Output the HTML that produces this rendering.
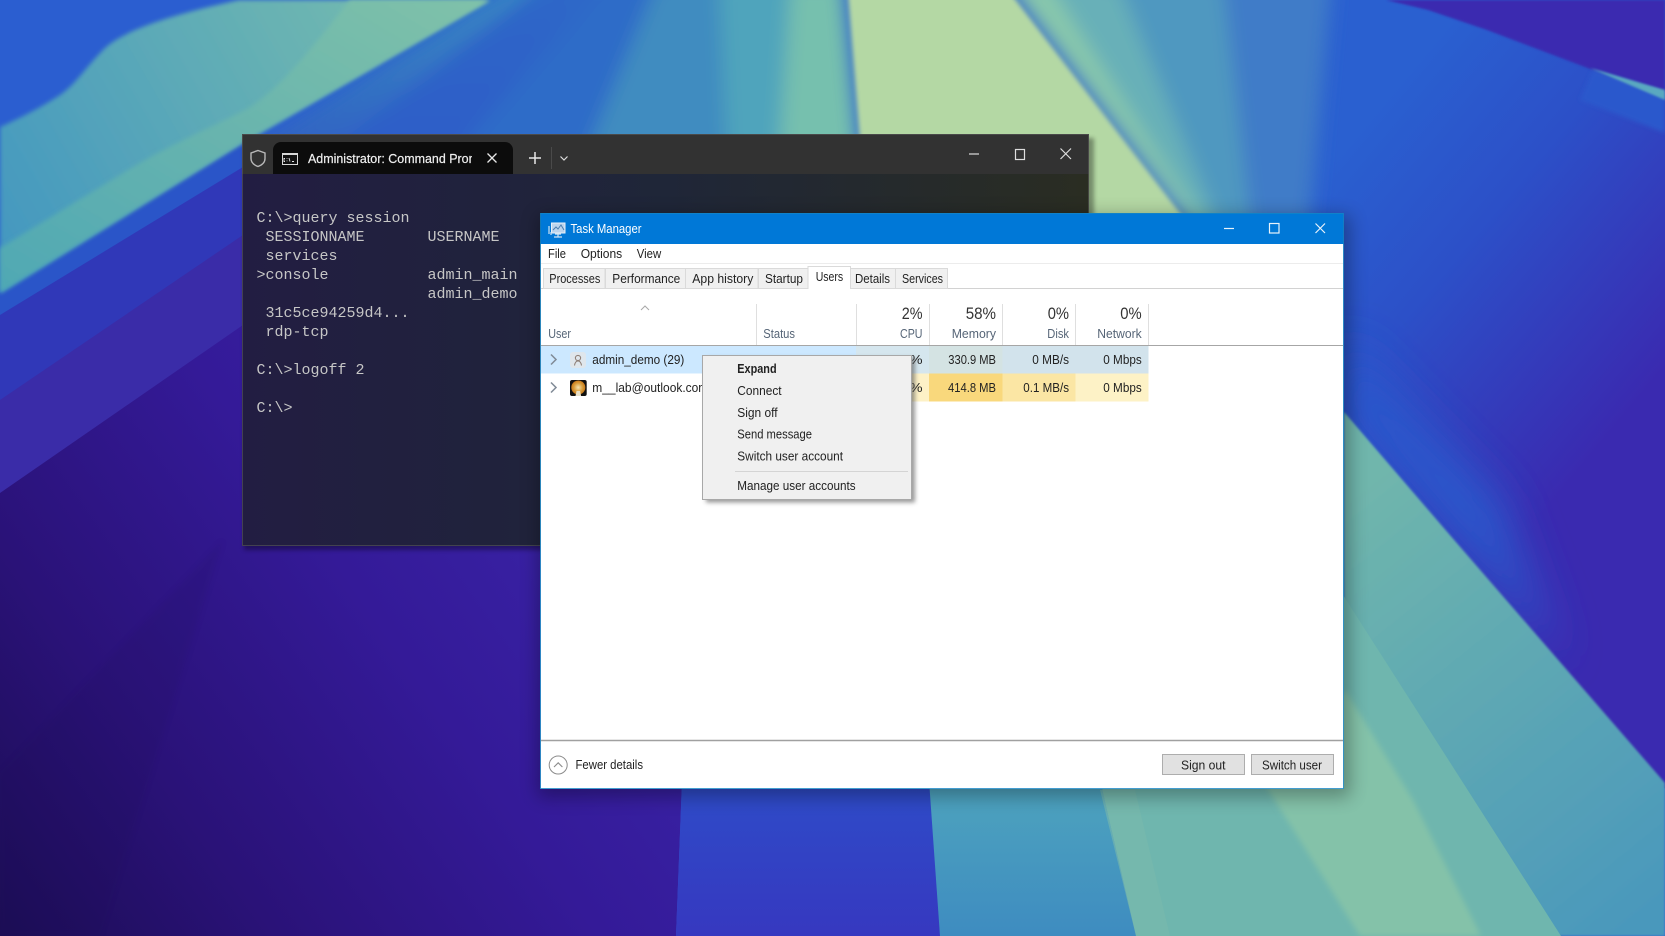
<!DOCTYPE html>
<html><head><meta charset="utf-8"><title>Task Manager</title>
<style>
html,body{margin:0;padding:0;width:1665px;height:936px;overflow:hidden;background:#2b5ed0}
svg{display:block}
text{font-family:"Liberation Sans",sans-serif;font-size:12.5px;fill:#222;white-space:pre}
.m{font-family:"Liberation Mono",monospace;font-size:15px;fill:#c6c6c6}
.h{fill:#566577}
.p{font-size:16.5px;fill:#333}
</style></head><body>
<svg xmlns="http://www.w3.org/2000/svg" width="1665" height="936" viewBox="0 0 1665 936">
<defs>
<filter id="b" x="-5%" y="-5%" width="110%" height="110%"><feGaussianBlur stdDeviation="9"/></filter>
<filter id="b3" x="-5%" y="-5%" width="110%" height="110%"><feGaussianBlur stdDeviation="3"/></filter>
<filter id="b1" x="-5%" y="-5%" width="110%" height="110%"><feGaussianBlur stdDeviation="1"/></filter>
<filter id="b2" x="-5%" y="-5%" width="110%" height="110%"><feGaussianBlur stdDeviation="2"/></filter>
<filter id="bb" x="-30%" y="-30%" width="160%" height="160%"><feGaussianBlur stdDeviation="22"/></filter>
<filter id="s1" x="-10%" y="-10%" width="120%" height="120%"><feGaussianBlur stdDeviation="9"/></filter>
<filter id="s2" x="-10%" y="-10%" width="120%" height="120%"><feGaussianBlur stdDeviation="2"/></filter>
<linearGradient id="pur" gradientUnits="userSpaceOnUse" x1="0" y1="936" x2="620" y2="500"><stop offset="0" stop-color="#1c0d55"/><stop offset=".3" stop-color="#2a1278"/><stop offset=".65" stop-color="#341a98"/><stop offset="1" stop-color="#3a24a8"/></linearGradient>
<linearGradient id="band" gradientUnits="userSpaceOnUse" x1="420" y1="0" x2="0" y2="240"><stop offset="0" stop-color="#76bcae"/><stop offset="1" stop-color="#4498c0"/></linearGradient>
<linearGradient id="strip" x1="0" y1="1" x2="1" y2="0"><stop offset="0" stop-color="#4fa8b4"/><stop offset=".5" stop-color="#68b4ae"/><stop offset="1" stop-color="#80c2a9"/></linearGradient>
<linearGradient id="blu" x1="0" y1="0" x2="0" y2="1"><stop offset="0" stop-color="#2e4cc8"/><stop offset="1" stop-color="#3638c0"/></linearGradient>
<linearGradient id="tb" x1="0" y1="0" x2="0" y2="1"><stop offset="0" stop-color="#4ea4be"/><stop offset="1" stop-color="#3e8cc0"/></linearGradient>
<linearGradient id="tr" gradientUnits="userSpaceOnUse" x1="1344" y1="500" x2="1665" y2="900"><stop offset="0" stop-color="#70b6ac"/><stop offset="1" stop-color="#4a98bc"/></linearGradient>
<linearGradient id="right" gradientUnits="userSpaceOnUse" x1="1340" y1="150" x2="1640" y2="400"><stop offset="0" stop-color="#2a60d0"/><stop offset=".4" stop-color="#2c50c8"/><stop offset="1" stop-color="#3a2ab0"/></linearGradient>
<linearGradient id="qa" x1="0" y1="0" x2="0" y2="1"><stop offset="0" stop-color="#3a8cc2"/><stop offset="1" stop-color="#2a4cc4"/></linearGradient>
<linearGradient id="qb" x1="0" y1="0" x2="0" y2="1"><stop offset="0" stop-color="#2f68c8"/><stop offset="1" stop-color="#2c58c8"/></linearGradient>
<linearGradient id="term" x1="0" y1="0" x2="1" y2="0"><stop offset="0" stop-color="#221d42"/><stop offset=".5" stop-color="#1f2638"/><stop offset="1" stop-color="#2a2d22"/></linearGradient>
<radialGradient id="ava"><stop offset="0" stop-color="#f4e2b0"/><stop offset=".6" stop-color="#d9a040"/><stop offset="1" stop-color="#c87818"/></radialGradient>
<clipPath id="tabclip"><rect x="300" y="145" width="172" height="25"/></clipPath>
<clipPath id="userclip"><rect x="585" y="375" width="118" height="26"/></clipPath>
</defs>

<!-- wallpaper -->
<rect width="1665" height="936" fill="#2b5ed0"/>
<polygon points="1240,-20 1700,-20 1700,830 1344,412 1290,240" fill="url(#right)"/>
<polygon points="1343,340 1343,412 1560,660 1500,500" fill="#2a58cc" filter="url(#bb)"/>

<!-- fan -->
<g filter="url(#b)">
<polygon points="520,-20 545,-20 219,240 97,240" fill="url(#qa)"/>
<polygon points="545,-20 608,-20 378,240 219,240" fill="url(#qb)"/>
<polygon points="608,-20 658,-20 550,240 378,240" fill="#2f6cc8"/>
<polygon points="658,-20 719,-20 731,240 550,240" fill="#3f8cc0"/>
<polygon points="719,-20 791,-20 773,240 731,240" fill="#50a4bc"/>
<polygon points="791,-20 843,-20 867,240 773,240" fill="#76c0ae"/>
<polygon points="1004,-20 1047,-20 1213,240 1201,240" fill="#88c8ac"/>
<polygon points="1047,-20 1117,-20 1225,240 1213,240" fill="#68b0b8"/>
<polygon points="1117,-20 1223,-20 1253,240 1225,240" fill="#4f98c0"/>
<polygon points="1223,-20 1332,-20 1308,240 1253,240" fill="#3f7cc8"/>
</g>
<polygon points="848,-5 1012,-5 1201,240 868,240" fill="#b4d8a4" filter="url(#b2)"/>

<!-- top right -->
<polygon points="1386,0 1428,10 1487,30 1593,70 1665,93 1665,0" fill="#3a2cb0" filter="url(#b1)"/>
<polygon points="1593,70 1665,93 1665,133 1580,100" fill="#2b58cc" filter="url(#b2)"/>
<polygon points="1590,68 1665,90 1665,100" fill="#5aa8c0" filter="url(#b1)"/>

<!-- left wedges -->
<polygon points="0,293 243,143 243,560 0,560" fill="#2a55c8"/>
<polygon points="0,315 243,167 243,560 0,560" fill="#3038b8"/>
<polygon points="0,400 243,235 243,560 0,560" fill="#3a2ca8"/>
<!-- left band -->
<path d="M239 0C170 15 125 30 105 48C85 68 75 85 60 95C40 108 20 118 0 127V293L242 143L490 0Z" fill="url(#band)" filter="url(#b2)"/>
<path d="M490 0H350C310 50 280 90 245 110C205 130 170 145 133 167L0 248V293L242 143Z" fill="url(#strip)" filter="url(#b2)"/>

<!-- bottom -->
<polygon points="0,493 243,325 700,325 676,936 0,936" fill="url(#pur)"/>
<polygon points="0,773 223,540 100,936 0,936" fill="#1c0d55" opacity=".12" filter="url(#b3)"/>
<polygon points="682,780 935,780 940,936 676,936" fill="url(#blu)"/>
<polygon points="929,780 1100,780 1136,936 940,936" fill="url(#tb)"/>
<polygon points="1344,412 1449,534 1665,783 1665,936 1344,936" fill="url(#tr)" filter="url(#b1)"/>
<polygon points="1343,595 1561,936 1136,936 1100,780 1343,780" fill="#6fb6ae"/>
<polygon points="1262,780 1345,690 1413,800 1481,936 1360,936" fill="#84c2a9" filter="url(#b3)"/>
<polygon points="1100,790 1135,790 1170,936 1136,936" fill="#7ab9ac" opacity=".6"/>

<!-- terminal -->
<rect x="244" y="138" width="850" height="412" fill="#000" opacity=".35" filter="url(#s2)"/>
<rect x="242" y="134" width="847" height="412" fill="url(#term)"/>
<rect x="242" y="134" width="847" height="40" fill="#323232"/>
<rect x="242.500" y="134.500" width="846" height="411" fill="none" stroke="#5a5a5a" stroke-opacity=".6"/>
<path d="M273 174V150a8 8 0 0 1 8-8h224a8 8 0 0 1 8 8v24z" fill="#0c0c0c"/>
<path d="M258 150.500l7 2.500v5.500c0 4-3 6.500-7 8-4-1.500-7-4-7-8V153z" fill="none" stroke="#b8b8b8" stroke-width="1.400"/>
<rect x="282.500" y="153.500" width="15" height="11" fill="#111" stroke="#d8d8d8"/>
<rect x="282" y="153" width="16" height="2" fill="#d8d8d8"/>
<path d="M285 158.500h-1v3h1M287 158v.7M287 160.500v.7M289 158l1 3.500M292 161.500h2" stroke="#e8e8e8" stroke-width=".9" fill="none"/>
<text x="308" y="163" clip-path="url(#tabclip)" textLength="171" lengthAdjust="spacingAndGlyphs" style="fill:#f0f0f0;font-size:13px;stroke:#f0f0f0;stroke-width:.2">Administrator: Command Prom</text>
<path d="M487.500 153.500l9 9M496.500 153.500l-9 9" stroke="#e8e8e8" stroke-width="1.300"/>
<path d="M529 158h12M535 152v12" stroke="#e8e8e8" stroke-width="1.500"/>
<path d="M551.500 147v22" stroke="#4a4a4a"/>
<path d="M560.500 156.500l3.500 3.500 3.500-3.500" stroke="#ddd" stroke-width="1.200" fill="none"/>
<path d="M969 154h10" stroke="#ddd" stroke-width="1.200"/>
<rect x="1015.500" y="149.500" width="9" height="10" fill="none" stroke="#ddd" stroke-width="1.200"/>
<path d="M1060.500 148.500l10.500 10.500M1071 148.500l-10.500 10.500" stroke="#ddd" stroke-width="1.200"/>
<g>
<text class="m" x="256.500" y="222">C:\&gt;query session</text>
<text class="m" x="256.500" y="241"> SESSIONNAME       USERNAME</text>
<text class="m" x="256.500" y="260"> services</text>
<text class="m" x="256.500" y="279">&gt;console           admin_main</text>
<text class="m" x="256.500" y="298">                   admin_demo</text>
<text class="m" x="256.500" y="317"> 31c5ce94259d4...</text>
<text class="m" x="256.500" y="336"> rdp-tcp</text>
<text class="m" x="256.500" y="374">C:\&gt;logoff 2</text>
<text class="m" x="256.500" y="412">C:\&gt;</text>
</g>

<!-- task manager -->
<rect x="538" y="215" width="812" height="582" fill="#000" opacity=".3" filter="url(#s1)"/>
<rect x="540.500" y="213" width="803" height="576" fill="#fff"/>
<rect x="540.500" y="213" width="803" height="31" fill="#0078d7"/>
<rect x="540.500" y="213.500" width="803" height="575" fill="none" stroke="#1484c4" stroke-opacity=".8"/>
<!-- title icon -->
<rect x="551.500" y="223" width="13.500" height="10" fill="#bcd4ec" stroke="#e8f0f8"/>
<path d="M553 230l3-3 2 2 3-4 3 5" stroke="#4a7fb0" fill="none"/>
<path d="M549 226v8M551 232v3M555 234h6M558 234v3M554 237h8" stroke="#cfe2f2" stroke-width="1.200" fill="none"/>
<text x="570.500" y="233" textLength="71" lengthAdjust="spacingAndGlyphs" style="fill:#fff">Task Manager</text>
<path d="M1224 228.500h10" stroke="#e8f3fb" stroke-width="1.200"/>
<rect x="1269.500" y="223.500" width="9.500" height="9.500" fill="none" stroke="#e8f3fb" stroke-width="1.200"/>
<path d="M1315.500 223.500l9.500 9.500M1325 223.500l-9.500 9.500" stroke="#e8f3fb" stroke-width="1.200"/>
<!-- menu -->
<text x="548" y="258" textLength="18" lengthAdjust="spacingAndGlyphs">File</text>
<text x="580.700" y="258" textLength="41.500" lengthAdjust="spacingAndGlyphs">Options</text>
<text x="636.700" y="258" textLength="24.500" lengthAdjust="spacingAndGlyphs">View</text>
<path d="M541 263.500h802" stroke="#ececec"/>
<path d="M541 288.500h802" stroke="#d2d2d2"/>
<!-- tabs -->
<rect x="543.500" y="268.500" width="61.500" height="20" fill="#f0f0f0" stroke="#dadada"/>
<rect x="605.500" y="268.500" width="80" height="20" fill="#f0f0f0" stroke="#dadada"/>
<rect x="685.500" y="268.500" width="72.500" height="20" fill="#f0f0f0" stroke="#dadada"/>
<rect x="758.500" y="268.500" width="49.500" height="20" fill="#f0f0f0" stroke="#dadada"/>
<rect x="850.500" y="268.500" width="45" height="20" fill="#f0f0f0" stroke="#dadada"/>
<rect x="895.500" y="268.500" width="52" height="20" fill="#f0f0f0" stroke="#dadada"/>
<path d="M808 289v-22.500h42.500V289" fill="#fff" stroke="#dadada"/>
<rect x="808.500" y="286" width="41.500" height="4" fill="#fff"/>
<text x="549.300" y="283" textLength="51" lengthAdjust="spacingAndGlyphs">Processes</text>
<text x="612.300" y="283" textLength="68" lengthAdjust="spacingAndGlyphs">Performance</text>
<text x="692.300" y="283" textLength="61" lengthAdjust="spacingAndGlyphs">App history</text>
<text x="765" y="283" textLength="38" lengthAdjust="spacingAndGlyphs">Startup</text>
<text x="815.700" y="281" textLength="27.500" lengthAdjust="spacingAndGlyphs">Users</text>
<text x="855" y="283" textLength="35" lengthAdjust="spacingAndGlyphs">Details</text>
<text x="902" y="283" textLength="41" lengthAdjust="spacingAndGlyphs">Services</text>
<!-- header -->
<path d="M641 310l4-4 4 4" stroke="#a8a8a8" fill="none"/>
<path d="M756.500 304v41M856.500 304v41M929.500 304v41M1002.500 304v41M1075.500 304v41M1148.500 304v41" stroke="#dfdfdf"/>
<text class="h" x="548.300" y="338" textLength="22.700" lengthAdjust="spacingAndGlyphs">User</text>
<text class="h" x="763.300" y="338" textLength="31.700" lengthAdjust="spacingAndGlyphs">Status</text>
<text class="h" x="900" y="338" textLength="22.500" lengthAdjust="spacingAndGlyphs">CPU</text>
<text class="h" x="951.700" y="338" textLength="44.300" lengthAdjust="spacingAndGlyphs">Memory</text>
<text class="h" x="1047.300" y="338" textLength="21.700" lengthAdjust="spacingAndGlyphs">Disk</text>
<text class="h" x="1097.300" y="338" textLength="44.400" lengthAdjust="spacingAndGlyphs">Network</text>
<text class="p" x="901.700" y="319" textLength="20.800" lengthAdjust="spacingAndGlyphs">2%</text>
<text class="p" x="965.700" y="319" textLength="30.300" lengthAdjust="spacingAndGlyphs">58%</text>
<text class="p" x="1047.700" y="319" textLength="21.300" lengthAdjust="spacingAndGlyphs">0%</text>
<text class="p" x="1120.300" y="319" textLength="21.400" lengthAdjust="spacingAndGlyphs">0%</text>
<path d="M541 345.500h802" stroke="#a6a6a6"/>
<!-- rows -->
<rect x="541" y="346" width="315" height="27.500" fill="#cce8ff"/>
<rect x="856" y="346" width="73" height="27.500" fill="#d5e6ee"/>
<rect x="929" y="346" width="73.500" height="27.500" fill="#d4e3e3"/>
<rect x="1002.500" y="346" width="73" height="27.500" fill="#d2e3ec"/>
<rect x="1075.500" y="346" width="73" height="27.500" fill="#d2e3ec"/>
<rect x="856" y="373.500" width="73" height="28" fill="#fdf1c6"/>
<rect x="929" y="373.500" width="73.500" height="28" fill="#f9d87c"/>
<rect x="1002.500" y="373.500" width="73" height="28" fill="#fbe6a4"/>
<rect x="1075.500" y="373.500" width="73" height="28" fill="#fdf2c6"/>
<path d="M551 354.500l5 5-5 5M551 382.500l5 5-5 5" stroke="#808a96" stroke-width="1.500" fill="none"/>
<rect x="570" y="352" width="16" height="16" rx="3" fill="#dfe6ec"/>
<circle cx="578" cy="358" r="2.600" fill="none" stroke="#8f8078" stroke-width="1.100"/>
<path d="M574.500 365.500c.5-3 2-4.500 3.500-4.500s3 1.500 3.500 4.500" fill="none" stroke="#8f8078" stroke-width="1.100"/>
<text x="592.300" y="364" textLength="92" lengthAdjust="spacingAndGlyphs">admin_demo (29)</text>
<rect x="570" y="380" width="16.700" height="16" rx="2" fill="#111"/>
<circle cx="578.300" cy="387.500" r="7" fill="url(#ava)"/>
<path d="M575.500 396l1-5h3.600l1 5z" fill="#e8e0c8"/>
<text x="592.300" y="392" clip-path="url(#userclip)" textLength="116" lengthAdjust="spacingAndGlyphs">m__lab@outlook.com</text>
<text x="901.500" y="364" textLength="21" lengthAdjust="spacingAndGlyphs">0%</text>
<text x="901.500" y="392" textLength="21" lengthAdjust="spacingAndGlyphs">0%</text>
<text x="948.300" y="364" textLength="47.700" lengthAdjust="spacingAndGlyphs">330.9 MB</text>
<text x="1032.300" y="364" textLength="36.700" lengthAdjust="spacingAndGlyphs">0 MB/s</text>
<text x="1103.300" y="364" textLength="38.400" lengthAdjust="spacingAndGlyphs">0 Mbps</text>
<text x="948" y="392" textLength="48" lengthAdjust="spacingAndGlyphs">414.8 MB</text>
<text x="1023.300" y="392" textLength="45.700" lengthAdjust="spacingAndGlyphs">0.1 MB/s</text>
<text x="1103.300" y="392" textLength="38.400" lengthAdjust="spacingAndGlyphs">0 Mbps</text>
<!-- context menu -->
<rect x="706" y="358" width="209" height="144.500" fill="#555" opacity=".6" filter="url(#s2)"/>
<rect x="702.500" y="355.500" width="209" height="144" fill="#f0f0f0" stroke="#a8a8a8"/>
<text x="737.300" y="373" textLength="39.300" lengthAdjust="spacingAndGlyphs" style="font-weight:bold">Expand</text>
<text x="737.300" y="395" textLength="44.300" lengthAdjust="spacingAndGlyphs">Connect</text>
<text x="737.300" y="417" textLength="40.300" lengthAdjust="spacingAndGlyphs">Sign off</text>
<text x="737.300" y="438.500" textLength="74.700" lengthAdjust="spacingAndGlyphs">Send message</text>
<text x="737.300" y="460.500" textLength="105.700" lengthAdjust="spacingAndGlyphs">Switch user account</text>
<path d="M735 471.500h173" stroke="#d4d4d4"/>
<text x="737.300" y="490" textLength="118.300" lengthAdjust="spacingAndGlyphs">Manage user accounts</text>
<!-- footer -->
<path d="M541 740.500h802" stroke="#a0a0a0" stroke-width="1.400"/>
<circle cx="558.200" cy="765" r="9" fill="#fff" stroke="#8c8c8c"/>
<path d="M554 767l4.200-4.200 4.200 4.200" fill="none" stroke="#8c8c8c" stroke-width="1.100"/>
<text x="575.500" y="769" textLength="67.500" lengthAdjust="spacingAndGlyphs">Fewer details</text>
<rect x="1162.500" y="754.500" width="82" height="20" fill="#e1e1e1" stroke="#adadad"/>
<rect x="1251.500" y="754.500" width="82" height="20" fill="#e1e1e1" stroke="#adadad"/>
<text x="1181" y="769.500" textLength="44.500" lengthAdjust="spacingAndGlyphs">Sign out</text>
<text x="1262" y="769.500" textLength="60" lengthAdjust="spacingAndGlyphs">Switch user</text>
</svg>
</body></html>
